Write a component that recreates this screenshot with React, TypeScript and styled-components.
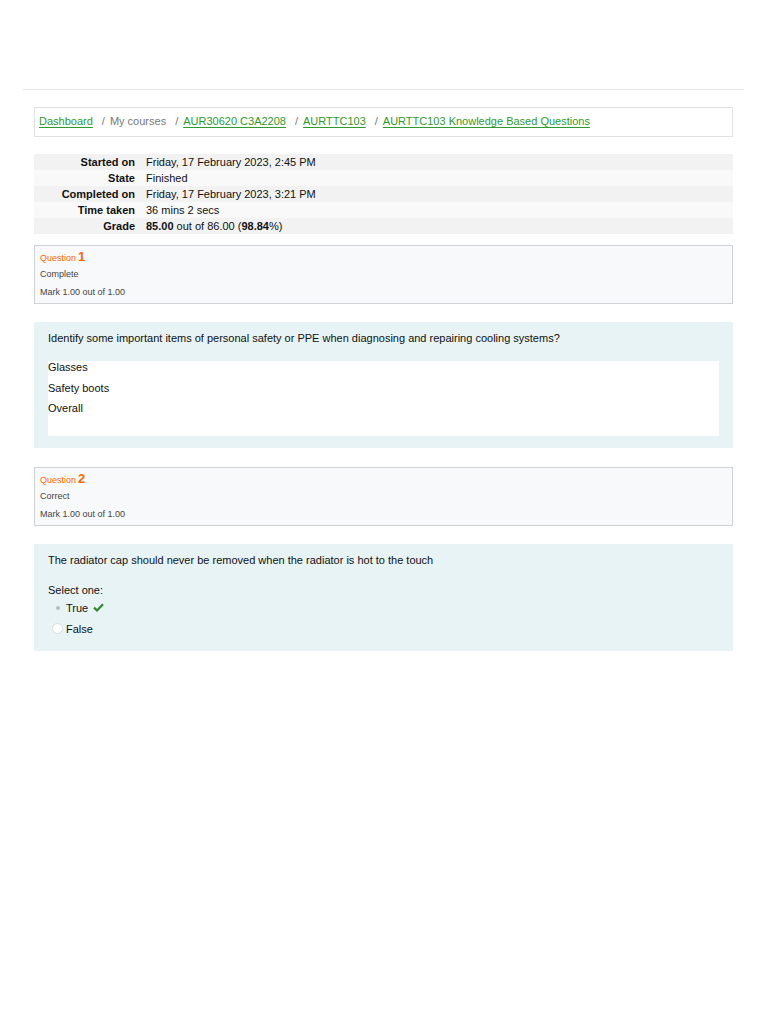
import React from "react";
import styled, { createGlobalStyle } from "styled-components";

const GlobalStyle = createGlobalStyle`
  body {
    margin: 0;
    background: #fff;
    font-family: "Liberation Sans", Arial, sans-serif;
    color: #1d2125;
  }
`;

const crumbs = [
  { label: "Dashboard", link: true },
  { label: "My courses", link: false },
  { label: "AUR30620 C3A2208", link: true },
  { label: "AURTTC103", link: true },
  { label: "AURTTC103 Knowledge Based Questions", link: true },
];

const summary = [
  { label: "Started on", value: "Friday, 17 February 2023, 2:45 PM" },
  { label: "State", value: "Finished" },
  { label: "Completed on", value: "Friday, 17 February 2023, 3:21 PM" },
  { label: "Time taken", value: "36 mins 2 secs" },
];

export default function App() {
  return (
    <>
      <GlobalStyle />
      <Page>
        <Header />
        <Main>
          <Breadcrumb>
            {crumbs.map((c, i) => (
              <Crumb key={c.label}>
                {i > 0 && <Sep>/</Sep>}
                {c.link ? <CrumbLink href="#">{c.label}</CrumbLink> : <CrumbText>{c.label}</CrumbText>}
              </Crumb>
            ))}
          </Breadcrumb>

          <Summary>
            <tbody>
              {summary.map((r) => (
                <tr key={r.label}>
                  <Th>{r.label}</Th>
                  <Td>{r.value}</Td>
                </tr>
              ))}
              <tr>
                <Th>Grade</Th>
                <Td>
                  <b>85.00</b> out of 86.00 (<b>98.84</b>%)
                </Td>
              </tr>
            </tbody>
          </Summary>

          <Info>
            <QNo>
              Question <span>1</span>
            </QNo>
            <State>Complete</State>
            <Grade>Mark 1.00 out of 1.00</Grade>
          </Info>
          <Content>
            <QText>Identify some important items of personal safety or PPE when diagnosing and repairing cooling systems?</QText>
            <Answer>
              <AnswerLine>Glasses</AnswerLine>
              <AnswerLine>Safety boots</AnswerLine>
              <AnswerLine>Overall</AnswerLine>
            </Answer>
          </Content>

          <Info>
            <QNo>
              Question <span>2</span>
            </QNo>
            <State>Correct</State>
            <Grade>Mark 1.00 out of 1.00</Grade>
          </Info>
          <Content>
            <QText>The radiator cap should never be removed when the radiator is hot to the touch</QText>
            <Prompt>Select one:</Prompt>
            <Option>
              <Radio $checked />
              True
              <svg width="11" height="9" viewBox="0 0 11 9">
                <path d="M1 4.6 L4 7.4 L10 1.2" fill="none" stroke="#2f8a2f" strokeWidth="2.2" />
              </svg>
            </Option>
            <Option>
              <Radio />
              False
            </Option>
          </Content>
        </Main>
      </Page>
    </>
  );
}

const Page = styled.div`
  padding: 0 24px 0 23px;
`;

const Header = styled.div`
  height: 89px;
  border-bottom: 1px solid #e6e6e6;
`;

const Main = styled.div`
  padding: 17px 11px 0;
`;

const Breadcrumb = styled.nav`
  display: flex;
  align-items: center;
  height: 28px;
  border: 1px solid #e2e2e2;
  padding: 0 4px 2px;
  box-sizing: content-box;
  height: 26px;
  font-size: 11px;
`;

const Crumb = styled.span`
  display: flex;
  align-items: center;
`;

const Sep = styled.span`
  color: #777;
  padding: 0 5px 0 9px;
`;

const CrumbLink = styled.a`
  color: #2e9a2e;
  text-decoration: underline;
  text-underline-offset: 2px;
`;

const CrumbText = styled.span`
  color: #777;
`;

const Summary = styled.table`
  width: 100%;
  margin-top: 17px;
  border-collapse: collapse;
  font-size: 11px;
  color: #111;
  tr:nth-child(odd) {
    background: #f2f2f2;
  }
  tr:nth-child(even) {
    background: #f9f9f9;
  }
`;

const Th = styled.th`
  width: 101px;
  height: 16px;
  padding: 0 11px 0 0;
  text-align: right;
  font-weight: bold;
`;

const Td = styled.td`
  padding: 0;
  height: 16px;
`;

const Info = styled.div`
  margin-top: 11px;
  height: 57px;
  padding: 0 5px;
  background: #f8f9fa;
  border: 1px solid #cfd2d4;
  font-size: 9px;
  color: #444;
`;

const QNo = styled.div`
  margin-top: 3px;
  color: #f60;
  height: 14px;
  display: flex;
  align-items: baseline;
  gap: 2px;
  span {
    font-size: 13px;
    font-weight: bold;
  }
`;

const State = styled.div`
  margin-top: 6px;
`;

const Grade = styled.div`
  margin-top: 8px;
`;

const Content = styled.div`
  margin: 18px 0 19px;
  background: #e7f3f5;
  padding: 10px 14px 12px;
  font-size: 11px;
  color: #111;
`;

const QText = styled.div`
  line-height: 13px;
`;

const Answer = styled.div`
  margin-top: 16px;
  height: 75px;
  background: #fff;
  padding-top: 0;
  box-sizing: border-box;
`;

const AnswerLine = styled.div`
  height: 20.5px;
  line-height: 13px;
`;

const Prompt = styled.div`
  margin-top: 17px;
  line-height: 13px;
`;

const Option = styled.div`
  display: flex;
  align-items: center;
  gap: 4px;
  height: 21px;
  svg {
    margin-left: 1px;
  }
`;

const Radio = styled.span<{ $checked?: boolean }>`
  width: 11px;
  height: 11px;
  margin-left: 4px;
  margin-right: -1px;
  border-radius: 50%;
  box-sizing: border-box;
  background: #fff;
  border: 1px solid ${(p) => (p.$checked ? "#e7f3f5" : "#d8dcdd")};
  position: relative;
  ${(p) =>
    p.$checked &&
    `
    background: #e7f3f5;
    &::after {
      content: "";
      position: absolute;
      left: 3px;
      top: 3px;
      width: 4px;
      height: 4px;
      border-radius: 50%;
      background: #bbb;
    }
  `}
`;
